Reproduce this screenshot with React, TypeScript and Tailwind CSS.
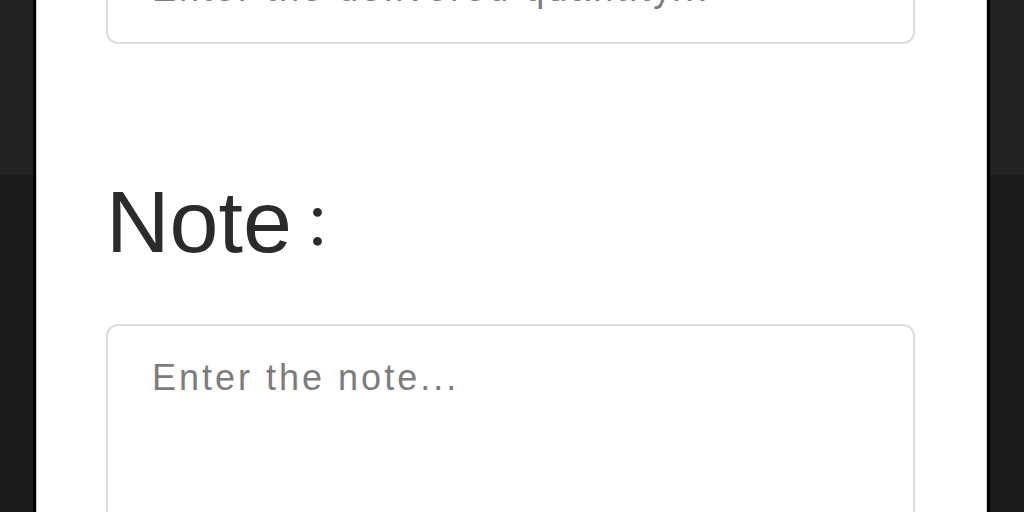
export default function App() {
  return (
    <div className="h-[512px] w-[1024px] overflow-hidden bg-[linear-gradient(to_bottom,#232323_175px,#1b1b1b_175px)] font-['Liberation_Sans','Noto_Sans_CJK_SC',sans-serif]">
      {/* sheet */}
      <div className="ml-[33px] h-full w-[957px] border-x-[3px] border-black">
        <div className="flex h-full flex-col border-x border-[#cfcfcf] bg-white pl-[69px] pr-[71px]">
          <input
            placeholder="Enter the delivered quantity..."
            className="-mt-[67px] block h-[111px] w-full shrink-0 rounded-[12px] border-2 border-[#dddddd] pl-[44px] text-[36px] tracking-[3px] text-[#333] outline-none placeholder:text-[#7c7c7c]"
          />

          <label className="mt-[134px] block text-[88px] leading-none text-[#2b2b2b]">
            Note<span className="ml-[11px] align-[7px] text-[58px] font-['Noto_Sans_CJK_SC',sans-serif]">：</span>
          </label>

          <textarea
            placeholder="Enter the note..."
            className="mt-[58px] block h-[260px] w-full shrink-0 resize-none rounded-[12px] border-2 border-[#dddddd] pl-[44px] pt-[25px] text-[36px] leading-normal tracking-[3px] text-[#333] outline-none placeholder:text-[#7c7c7c]"
          />
        </div>
      </div>
    </div>
  );
}
